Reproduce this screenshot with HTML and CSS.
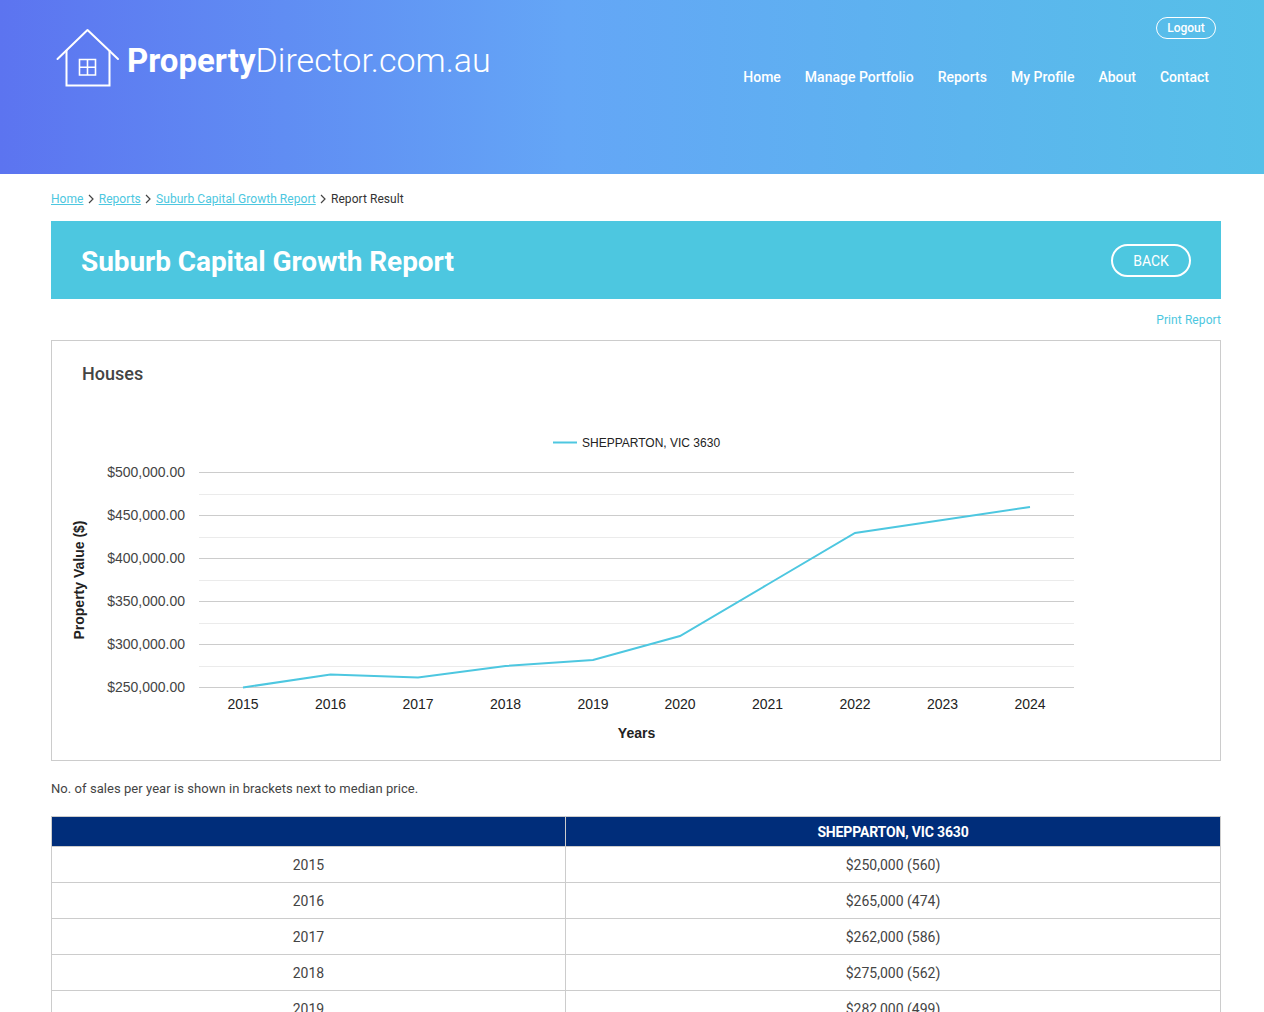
FILE: index.html
```html
<!DOCTYPE html>
<html lang="en">
<head>
  <meta charset="UTF-8" />
  <meta name="viewport" content="width=device-width, initial-scale=1" />
  <title>Suburb Capital Growth Report</title>
  <link rel="stylesheet" href="styles.css">
</head>
<body>
  <header class="site-header">
    <a class="logo" href="#">
      <svg class="logo-icon" width="64" height="60" viewBox="0 0 64 60" fill="none" stroke="#fff" aria-hidden="true">
        <path d="M1.5 31 L31.5 2 L62 31" stroke-width="2" stroke-linecap="round" stroke-linejoin="round"/>
        <path d="M10.5 22 V57.5 H53.5 V22" stroke-width="2"/>
        <path d="M23.5 31.5 H39.5 V47 H23.5 Z M31.5 31.5 V47 M23.5 39.25 H39.5" stroke-width="1.6"/>
      </svg>
      <span class="logo-text"><b>Property</b>Director.com.au</span>
    </a>
    <div class="header-right">
      <a class="logout" href="#">Logout</a>
      <nav class="main-nav">
        <a href="#">Home</a>
        <a href="#">Manage Portfolio</a>
        <a href="#">Reports</a>
        <a href="#">My Profile</a>
        <a href="#">About</a>
        <a href="#">Contact</a>
      </nav>
    </div>
  </header>

  <main class="content">
    <div class="breadcrumb">
      <a href="#">Home</a>
      <svg class="crumb-sep" width="6" height="10" viewBox="0 0 6 10"><path d="M1 1 L5 5 L1 9" fill="none" stroke="#444" stroke-width="1.2"/></svg>
      <a href="#">Reports</a>
      <svg class="crumb-sep" width="6" height="10" viewBox="0 0 6 10"><path d="M1 1 L5 5 L1 9" fill="none" stroke="#444" stroke-width="1.2"/></svg>
      <a href="#">Suburb Capital Growth Report</a>
      <svg class="crumb-sep" width="6" height="10" viewBox="0 0 6 10"><path d="M1 1 L5 5 L1 9" fill="none" stroke="#444" stroke-width="1.2"/></svg>
      <span>Report Result</span>
    </div>

    <div class="title-bar">
      <h1>Suburb Capital Growth Report</h1>
      <a class="back-btn" href="#">BACK</a>
    </div>

    <div class="print-row"><a href="#">Print Report</a></div>

    <section class="chart-card">
      <h3>Houses</h3>
      <!-- viewBox uses page coordinates so the points are easy to read -->
      <svg class="chart" width="1168" height="358" viewBox="52 401 1168 358" role="img" aria-label="Property value by year">
        <g class="legend">
          <line x1="553" y1="442.5" x2="577" y2="442.5" class="series"/>
          <text x="582" y="447">SHEPPARTON, VIC 3630</text>
        </g>

        <g class="grid-minor">
          <line x1="199" x2="1074" y1="494.5" y2="494.5"/>
          <line x1="199" x2="1074" y1="537.5" y2="537.5"/>
          <line x1="199" x2="1074" y1="580.5" y2="580.5"/>
          <line x1="199" x2="1074" y1="623.5" y2="623.5"/>
          <line x1="199" x2="1074" y1="666.5" y2="666.5"/>
        </g>
        <g class="grid-major">
          <line x1="199" x2="1074" y1="472.5" y2="472.5"/>
          <line x1="199" x2="1074" y1="515.5" y2="515.5"/>
          <line x1="199" x2="1074" y1="558.5" y2="558.5"/>
          <line x1="199" x2="1074" y1="601.5" y2="601.5"/>
          <line x1="199" x2="1074" y1="644.5" y2="644.5"/>
          <line x1="199" x2="1074" y1="687.5" y2="687.5"/>
        </g>

        <g class="y-labels">
          <text x="185" y="477">$500,000.00</text>
          <text x="185" y="520">$450,000.00</text>
          <text x="185" y="563">$400,000.00</text>
          <text x="185" y="606">$350,000.00</text>
          <text x="185" y="649">$300,000.00</text>
          <text x="185" y="692">$250,000.00</text>
        </g>
        <g class="x-labels">
          <text x="243" y="709">2015</text>
          <text x="330.5" y="709">2016</text>
          <text x="418" y="709">2017</text>
          <text x="505.5" y="709">2018</text>
          <text x="593" y="709">2019</text>
          <text x="680" y="709">2020</text>
          <text x="767.5" y="709">2021</text>
          <text x="855" y="709">2022</text>
          <text x="942.5" y="709">2023</text>
          <text x="1030" y="709">2024</text>
        </g>

        <polyline class="series" points="243,687.5 330.5,674.5 418,677.5 505.5,666 593,660 680,636 767.5,584.5 855,533 942.5,520 1030,507"/>

        <text class="axis-title" x="636.5" y="738">Years</text>
        <text class="axis-title" transform="translate(84 580) rotate(-90)">Property Value ($)</text>
      </svg>
    </section>

    <p class="note">No. of sales per year is shown in brackets next to median price.</p>

    <table class="report-table">
      <thead>
        <tr><th></th><th>SHEPPARTON, VIC 3630</th></tr>
      </thead>
      <tbody>
        <tr><td>2015</td><td>$250,000 (560)</td></tr>
        <tr><td>2016</td><td>$265,000 (474)</td></tr>
        <tr><td>2017</td><td>$262,000 (586)</td></tr>
        <tr><td>2018</td><td>$275,000 (562)</td></tr>
        <tr><td>2019</td><td>$282,000 (499)</td></tr>
      </tbody>
    </table>
  </main>
</body>
</html>
```

FILE: styles.css
```css
html, body {
  height: 1012px;
  overflow: hidden;
}

body {
  margin: 0;
  background: #fff;
  color: #444;
  font-family: Roboto, Arial, sans-serif;
  font-size: 14px;
}

a {
  text-decoration: none;
}

/* Header */
.site-header {
  height: 174px;
  box-sizing: border-box;
  padding: 17px 48px 0 56px;
  display: flex;
  justify-content: space-between;
  align-items: flex-start;
  background: linear-gradient(90deg, #5c74f0 0%, #64a6f6 45%, #56c0e8 100%);
}

.logo {
  display: flex;
  align-items: flex-start;
  gap: 7px;
  margin-top: 11px;
  color: #fff;
}

.logo-icon {
  display: block;
}

.logo-text {
  font-size: 34px;
  font-weight: 300;
  line-height: 44px;
  margin-top: 10px;
  white-space: nowrap;
}

.logo-text b {
  font-size: 33px;
  font-weight: 700;
}

.header-right {
  display: flex;
  flex-direction: column;
  align-items: flex-end;
}

.logout {
  width: 60px;
  height: 22px;
  box-sizing: border-box;
  border: 1px solid #fff;
  border-radius: 11px;
  color: #fff;
  font-size: 12px;
  font-weight: 500;
  line-height: 21px;
  text-align: center;
}

.main-nav {
  display: flex;
  gap: 24px;
  margin-top: 29px;
  padding-right: 7px;
}

.main-nav a {
  color: #fff;
  font-size: 14px;
  font-weight: 500;
  line-height: 18px;
}

/* Page body */
.content {
  padding: 0 43px 0 51px;
}

.breadcrumb {
  display: flex;
  align-items: center;
  gap: 4.6px;
  height: 49px;
  margin-bottom: -2px;
  font-size: 12px;
  letter-spacing: 0.05px;
  color: #333;
}

.breadcrumb a {
  color: #4dc7e0;
  text-decoration: underline;
}

.title-bar {
  height: 78px;
  box-sizing: border-box;
  padding: 0 30px;
  display: flex;
  justify-content: space-between;
  align-items: center;
  background: #4dc7e0;
}

.title-bar h1 {
  margin: 2px 0 0;
  color: #fff;
  font-size: 28px;
  font-weight: 700;
  letter-spacing: -0.08px;
}

.back-btn {
  width: 80px;
  height: 33px;
  box-sizing: border-box;
  border: 2px solid #fff;
  border-radius: 17px;
  color: #fff;
  font-size: 14px;
  line-height: 30px;
  text-align: center;
}

.print-row {
  height: 41px;
  box-sizing: border-box;
  padding-top: 14px;
  text-align: right;
  font-size: 12px;
  line-height: 14px;
  letter-spacing: 0.08px;
}

.print-row a {
  color: #4dc7e0;
}

.chart-card {
  height: 421px;
  box-sizing: border-box;
  border: 1px solid #ccc;
}

.chart-card h3 {
  margin: 0;
  height: 60px;
  box-sizing: border-box;
  padding: 21px 0 0 30px;
  font-size: 18px;
  font-weight: 500;
  line-height: 24px;
  color: #444;
}

.chart {
  display: block;
  font-family: "Liberation Sans", Arial, sans-serif;
}

.chart .series {
  fill: none;
  stroke: #4dc7e0;
  stroke-width: 2;
}

.chart .legend text {
  font-size: 12px;
  fill: #222;
}

.chart .grid-major line {
  stroke: #ccc;
}

.chart .grid-minor line {
  stroke: #ebebeb;
}

.chart .y-labels text {
  font-size: 14px;
  fill: #444;
  text-anchor: end;
}

.chart .x-labels text {
  font-size: 14px;
  fill: #222;
  text-anchor: middle;
}

.chart .axis-title {
  font-size: 14px;
  font-weight: 700;
  fill: #222;
  text-anchor: middle;
}

.note {
  margin: 20px 0 0;
  height: 35px;
  font-size: 13px;
  line-height: 16px;
  letter-spacing: 0.055px;
  color: #444;
}

.report-table {
  width: 100%;
  border-collapse: collapse;
  table-layout: fixed;
}

.report-table th,
.report-table td {
  border: 1px solid #ccc;
  text-align: center;
}

.report-table th {
  height: 29px;
  padding: 0;
  background: #002d7a;
  color: #fff;
  font-size: 14px;
  font-weight: 700;
  letter-spacing: -0.15px;
}

.report-table th:first-child,
.report-table td:first-child {
  width: 513px;
}

.report-table td {
  height: 35px;
  padding: 0;
  font-size: 14px;
  color: #444;
}
```
